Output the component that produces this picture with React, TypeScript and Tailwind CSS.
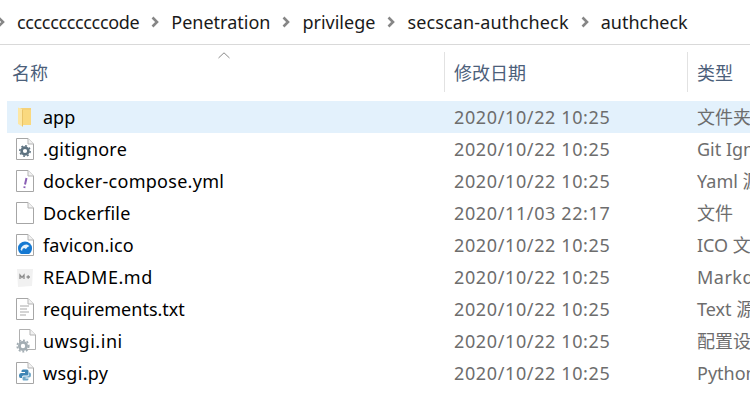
import type { ReactNode } from "react";

const font = { fontFamily: '"Noto Sans", "Noto Sans CJK SC", sans-serif' };

function Chevron() {
  return (
    <svg width="8" height="12" viewBox="0 0 8 12" className="shrink-0">
      <path d="M1.5 1.5 L6 6 L1.5 10.5" fill="none" stroke="#868686" strokeWidth="2.6" />
    </svg>
  );
}

function Sheet({ children }: { children?: ReactNode }) {
  return (
    <svg width="18" height="22" viewBox="0 0 18 22">
      <path d="M.5.5H12L17.5 6V21.5H.5Z" fill="#fff" stroke="#a6a6a6" />
      <path d="M12 .5V6H17.5" fill="#f2f2f2" stroke="#b5b5b5" />
      {children}
    </svg>
  );
}

function FolderIcon() {
  return (
    <svg width="18" height="22" viewBox="0 0 18 22">
      <path d="M2 2 H15 V19 H6 V3 Z" fill="#f5d27a" />
      <path d="M7 4 H15 V19 H7 Z" fill="#fad97f" />
      <path d="M2 1.5 L6.5 3.5 V20.5 L2 18 Z" fill="#fde7a4" />
      <path d="M6.5 3.5 V20.5" stroke="#eac468" strokeWidth="1" />
    </svg>
  );
}

const icons: Record<string, ReactNode> = {
  folder: <FolderIcon />,
  gear: (
    <Sheet>
      <circle cx="9" cy="13" r="3.4" fill="none" stroke="#5d7280" strokeWidth="2.6" />
      <circle cx="9" cy="13" r="5.2" fill="none" stroke="#5d7280" strokeWidth="1.4" strokeDasharray="2 2" />
    </Sheet>
  ),
  yaml: (
    <Sheet>
      <path d="M10.5 8 L9 14.5 M8.6 16.4 L8.3 18" stroke="#8a5fb5" strokeWidth="2" fill="none" />
    </Sheet>
  ),
  blank: <Sheet />,
  ico: (
    <Sheet>
      <path d="M2 14 A7 6.5 0 0 1 16 14 Q16 18 13 20 H5 Q2 18 2 14Z" fill="#1579d2" />
      <path d="M4.5 15.5 Q6 10.5 11 10.5 L13.5 12 Q11 13 10 15 L8 14 Q6 14.5 6 17Z" fill="#e8f3fb" />
    </Sheet>
  ),
  md: (
    <svg width="18" height="22" viewBox="0 0 18 22">
      <path d="M1 3H17L16 20L2 21Z" fill="#f1f1f1" />
      <path d="M4 13V9L6 11.5L8 9V13M10.5 11H14M12.2 9.2V12.8" fill="none" stroke="#8d8d8d" strokeWidth="1.3" />
    </svg>
  ),
  text: (
    <Sheet>
      <path d="M4 8H13M4 11H11M4 14H13M4 17H10" stroke="#c6c6c6" strokeWidth="1.4" />
    </Sheet>
  ),
  ini: (
    <svg width="20" height="24" viewBox="0 0 20 24">
      <path d="M3.5.5H14L19.5 6V20.5H3.5Z" fill="#fff" stroke="#b0b0b0" />
      <path d="M14 .5V6H19.5" fill="#f2f2f2" stroke="#b5b5b5" />
      <circle cx="7" cy="17" r="3.6" fill="none" stroke="#a3adb3" strokeWidth="2.8" />
      <circle cx="7" cy="17" r="5.8" fill="none" stroke="#a3adb3" strokeWidth="1.6" strokeDasharray="2 1.8" />
    </svg>
  ),
  py: (
    <Sheet>
      <path d="M7 7.5 H11 Q12.5 7.5 12.5 9 V12 Q12.5 13.5 11 13.5 H7.5 Q6 13.5 6 15 V16 H4.5 Q3 16 3 13.5 Q3 11 5 11 H9 V10 H5.5 V9 Q5.5 7.5 7 7.5Z" fill="#3f86b5" />
      <path d="M11 18.5 H7.5 Q6.5 18.5 6.5 17 V15.5 Q6.5 14.5 8 14.5 H11 Q13 14.5 13 12.5 V10.5 H13.8 Q15 10.5 15 13 Q15 15.5 13 15.5 H9.5 V16.5 H12.5 V17 Q12.5 18.5 11 18.5Z" fill="#6fa8c9" />
    </Sheet>
  ),
};

const files = [
  { icon: "folder", name: "app", nameCls: "", date: "2020/10/22 10:25", type: "文件夹", typeCls: "" },
  { icon: "gear", name: ".gitignore", nameCls: "tracking-[0.2px]", date: "2020/10/22 10:25", type: "Git Ignore", typeCls: "" },
  { icon: "yaml", name: "docker-compose.yml", nameCls: "tracking-[0.28px]", date: "2020/10/22 10:25", type: "Yaml 源文件", typeCls: "" },
  { icon: "blank", name: "Dockerfile", nameCls: "tracking-[0.2px]", date: "2020/11/03 22:17", type: "文件", typeCls: "" },
  { icon: "ico", name: "favicon.ico", nameCls: "tracking-[0.1px]", date: "2020/10/22 10:25", type: "ICO 文件", typeCls: "" },
  { icon: "md", name: "README.md", nameCls: "tracking-[0.55px]", date: "2020/10/22 10:25", type: "Markdown", typeCls: "tracking-[0.5px]" },
  { icon: "text", name: "requirements.txt", nameCls: "", date: "2020/10/22 10:25", type: "Text 源文件", typeCls: "" },
  { icon: "ini", name: "uwsgi.ini", nameCls: "tracking-[0.55px]", date: "2020/10/22 10:25", type: "配置设置", typeCls: "" },
  { icon: "py", name: "wsgi.py", nameCls: "tracking-[0.3px]", date: "2020/10/22 10:25", type: "Python", typeCls: "" },
];

const crumbs = [
  { label: "cccccccccccode", cls: "tracking-[-0.35px]" },
  { label: "Penetration", cls: "" },
  { label: "privilege", cls: "" },
  { label: "secscan-authcheck", cls: "tracking-[0.15px]" },
  { label: "authcheck", cls: "" },
];

export default function App() {
  return (
    <div className="w-[750px] h-[416px] overflow-hidden bg-white text-[18px]" style={font}>
      <div className="flex items-center h-[45px] border-b border-[#d9d9d9] pl-[17px] gap-[12px] text-[#1a1a1a] relative">
        <span className="absolute left-[-3px] top-[16px]">
          <Chevron />
        </span>
        {crumbs.map((c, i) => (
          <div key={c.label} className="flex items-center gap-[12px]">
            {i > 0 && <Chevron />}
            <span className={`leading-none ${c.cls}`}>{c.label}</span>
          </div>
        ))}
      </div>
      <div className="relative grid grid-cols-[444px_243px_63px] h-[56px] text-[#4c607a]">
        <svg width="12" height="7" viewBox="0 0 12 7" className="absolute left-[218px] top-[7px]">
          <path d="M.5 6 L6 .8 L11.5 6" fill="none" stroke="#8a8a8a" />
        </svg>
        <div className="pl-[12px] pt-[15px]">名称</div>
        <div className="pl-[10px] pt-[15px]">
          <div className="absolute left-[444px] top-[7px] h-[40px] w-px bg-[#e2e2e2]" />
          修改日期
        </div>
        <div className="pl-[10px] pt-[15px] whitespace-nowrap">
          <div className="absolute left-[687px] top-[7px] h-[40px] w-px bg-[#e2e2e2]" />
          类型
        </div>
      </div>
      <div className="pl-[7px]">
        {files.map((f, i) => (
          <div
            key={f.name}
            className={`grid grid-cols-[437px_243px_63px] h-[32px] items-center ${i === 0 ? "bg-[#e3f1fc]" : ""}`}
          >
            <div className="flex items-center">
              <span className="w-[36px] pl-[9px] flex items-center shrink-0">{icons[f.icon]}</span>
              <span className={`text-black ${f.nameCls}`}>{f.name}</span>
            </div>
            <div className="pl-[10px] text-[#6d6d6d] tracking-[0.62px] whitespace-nowrap">{f.date}</div>
            <div className={`pl-[10px] text-[#6d6d6d] whitespace-nowrap overflow-hidden ${f.typeCls}`}>{f.type}</div>
          </div>
        ))}
      </div>
    </div>
  );
}
